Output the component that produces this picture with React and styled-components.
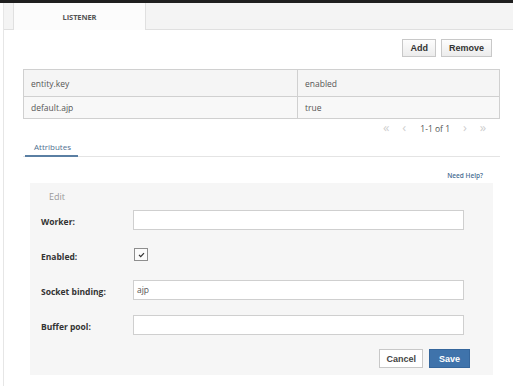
import React from 'react';
import styled, { createGlobalStyle } from 'styled-components';

const GlobalStyle = createGlobalStyle`
    html, body {
        margin: 0;
        padding: 0;
        background: #ffffff;
    }
    body {
        font-family: "Open Sans", "Liberation Sans", sans-serif;
        color: #555;
    }
`;

const TopBar = styled.div`
    height: 3px;
    background-color: #1f1f1f;
`;

const Page = styled.div`
    margin-left: 3px;
    border-left: 1px solid #e6e6e6;
    min-height: 383px;
`;

const TabStrip = styled.div`
    display: flex;
    height: 26px;
    padding-left: 9px;
    background-color: #f4f4f4;
    border-bottom: 1px solid #e0e0e0;
`;

const Tab = styled.div`
    width: 131px;
    display: flex;
    align-items: center;
    justify-content: center;
    background-color: #fcfcfc;
    border: 1px solid #e0e0e0;
    border-top: none;
    border-bottom: none;
    margin-bottom: -1px;
    font-size: 7.5px;
    font-weight: 700;
    color: #555;
    letter-spacing: -0.1px;
`;

const Content = styled.div`
    padding: 0 13px 0 19px;
`;

const Toolbar = styled.div`
    display: flex;
    justify-content: flex-end;
    gap: 5px;
    padding: 9px 8px 0 0;
    height: 18px;
`;

const ToolButton = styled.button`
    height: 18px;
    padding: 0 7px;
    font-family: "Liberation Sans", Arial, sans-serif;
    font-size: 9px;
    font-weight: 700;
    color: #333;
    background: linear-gradient(#fdfdfd, #ececec);
    border: 1px solid #c8c8c8;
    border-radius: 0;
    cursor: pointer;
`;

const Table = styled.div`
    margin-top: 12px;
    border: 1px solid #d0d0d0;
    border-bottom: none;
`;

const Row = styled.div`
    display: grid;
    grid-template-columns: 273px 1fr;
    height: ${p => p.$h}px;
    background-color: ${p => p.$bg};
    border-bottom: 1px solid #d0d0d0;
`;

const Cell = styled.div`
    display: flex;
    align-items: center;
    padding-left: 7px;
    font-size: 8.5px;
    color: #555;
    & + & {
        border-left: 1px solid #d0d0d0;
    }
`;

const Pager = styled.div`
    display: flex;
    justify-content: flex-end;
    align-items: center;
    padding-right: 8px;
    height: 18px;
    font-size: 8.5px;
    color: #555;
`;

const PageArrow = styled.span`
    color: #cfcfcf;
    font-size: 13px;
    line-height: 13px;
    width: 18px;
    text-align: center;
    margin-top: -2px;
`;

const PageText = styled.span`
    margin: 0 6px 0 7px;
`;

const SubTabs = styled.div`
    display: flex;
    border-bottom: 1px solid #e4e4e4;
`;

const SubTab = styled.div`
    padding: 0 6px 0 9px;
    height: 18px;
    width: 38px;
    display: flex;
    align-items: center;
    margin-left: 2px;
    font-size: 8px;
    color: #4f6f8f;
    border-bottom: 2px solid #5a7fa3;
    margin-bottom: -1px;
`;

const HelpRow = styled.div`
    display: flex;
    justify-content: flex-end;
    padding: 14px 17px 0 0;
    height: 12px;
    line-height: 10px;
`;

const HelpLink = styled.a`
    font-size: 6.5px;
    font-weight: 600;
    color: #4a6f93;
    text-decoration: none;
`;

const EditPanel = styled.div`
    margin: 0 7px;
    padding: 0 0 7px 0;
    background-color: #f6f6f6;
`;

const EditTitle = styled.div`
    padding: 7px 0 0 19px;
    height: 11px;
    line-height: 14px;
    font-size: 9px;
    color: #999;
`;

const FormGrid = styled.div`
    display: grid;
    grid-template-columns: 103px 331px;
    grid-auto-rows: 35px;
    align-items: center;
    margin-top: 1px;
`;

const Label = styled.label`
    padding-left: 11px;
    font-size: 8.5px;
    font-weight: 700;
    color: #333;
    margin-top: 3px;
`;

const TextInput = styled.div`
    box-sizing: border-box;
    height: 20px;
    background: #fff;
    border: 1px solid #cfcfcf;
    display: flex;
    align-items: center;
    padding-left: 3px;
    font-size: 8.5px;
    color: #555;
`;

const CheckBox = styled.span`
    box-sizing: border-box;
    width: 14px;
    height: 13px;
    margin-left: 1px;
    border: 1px solid #8e8e8e;
    background: #fbfbfb;
    display: flex;
    align-items: center;
    justify-content: center;
`;

const Actions = styled.div`
    display: flex;
    justify-content: flex-end;
    gap: 6px;
    padding: 7px 23px 0 0;
`;

const ActionButton = styled.button`
    height: 19px;
    padding: 0 ${p => (p.$primary ? 9 : 6)}px;
    font-family: "Liberation Sans", Arial, sans-serif;
    font-size: 9px;
    font-weight: 700;
    color: ${p => (p.$primary ? '#fff' : '#444')};
    background: ${p => (p.$primary ? '#3f73ab' : '#fff')};
    border: 1px solid ${p => (p.$primary ? '#35669c' : '#c8c8c8')};
    border-radius: 0;
    cursor: pointer;
`;

const rows = [
    { key: 'entity.key', value: 'enabled', h: 26, bg: '#f5f5f5' },
    { key: 'default.ajp', value: 'true', h: 21, bg: '#f8f8f8' },
];

const App = () => {
    return (
        <>
            <GlobalStyle />
            <TopBar />
            <Page>
                <TabStrip>
                    <Tab>LISTENER</Tab>
                </TabStrip>
                <Content>
                    <Toolbar>
                        <ToolButton>Add</ToolButton>
                        <ToolButton>Remove</ToolButton>
                    </Toolbar>
                    <Table>
                        {rows.map(r => (
                            <Row key={r.key} $h={r.h} $bg={r.bg}>
                                <Cell>{r.key}</Cell>
                                <Cell>{r.value}</Cell>
                            </Row>
                        ))}
                    </Table>
                    <Pager>
                        <PageArrow>«</PageArrow>
                        <PageArrow>‹</PageArrow>
                        <PageText>1-1 of 1</PageText>
                        <PageArrow>›</PageArrow>
                        <PageArrow>»</PageArrow>
                    </Pager>
                    <SubTabs>
                        <SubTab>Attributes</SubTab>
                    </SubTabs>
                    <HelpRow>
                        <HelpLink href="#">Need Help?</HelpLink>
                    </HelpRow>
                    <EditPanel>
                        <EditTitle>Edit</EditTitle>
                        <FormGrid>
                            <Label>Worker:</Label>
                            <TextInput />
                            <Label>Enabled:</Label>
                            <div>
                                <CheckBox>
                                    <svg width="7" height="6" viewBox="0 0 7 6">
                                        <path d="M1 2.8 L2.7 4.6 L6 1.2" fill="none" stroke="#333" strokeWidth="1.2" />
                                    </svg>
                                </CheckBox>
                            </div>
                            <Label>Socket binding:</Label>
                            <TextInput>ajp</TextInput>
                            <Label>Buffer pool:</Label>
                            <TextInput />
                        </FormGrid>
                        <Actions>
                            <ActionButton>Cancel</ActionButton>
                            <ActionButton $primary>Save</ActionButton>
                        </Actions>
                    </EditPanel>
                </Content>
            </Page>
        </>
    );
};

export default App;
